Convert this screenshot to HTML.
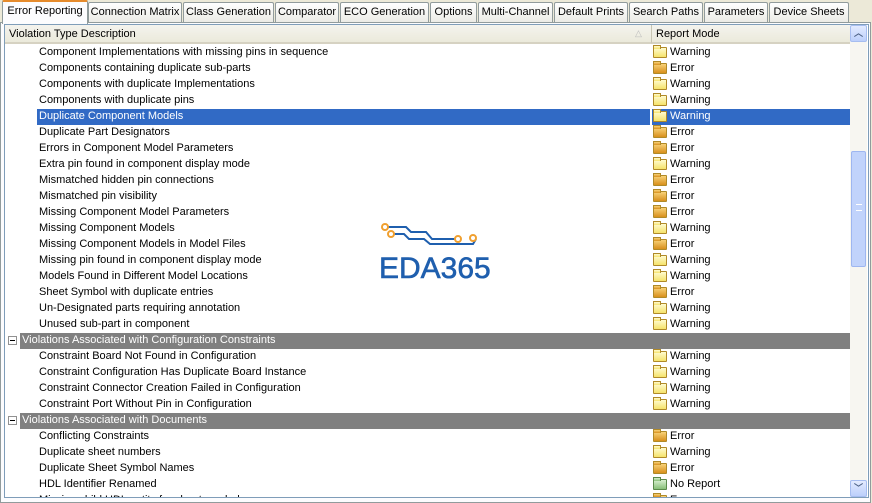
<!DOCTYPE html><html><head><style>
*{margin:0;padding:0;box-sizing:border-box}
body{width:872px;height:503px;background:#ece9d8;font:11px "Liberation Sans",sans-serif;color:#000;position:relative;overflow:hidden}
.tab{position:absolute;top:2px;height:20px;border:1px solid #919b9c;border-bottom:none;background:linear-gradient(#fff,#ecebe6);padding:3px 0 0;text-align:center;white-space:nowrap;border-radius:2px 2px 0 0}
.tab.a{top:0;height:24px;background:#fcfcfe;border-top:2px solid #e68b2c;z-index:2;padding-top:3px}
.panel{position:absolute;left:0;top:22px;width:871px;height:481px;border:1px solid #919b9c;background:#fcfcfe}
.list{position:absolute;left:4px;top:24px;width:865px;height:474px;border:1px solid #7f9db9;background:#fff;overflow:hidden}
.hdr{position:absolute;top:0;height:19px;background:linear-gradient(#f4f3ee,#ebeadb);border-bottom:2px solid #d6d2c2;padding:3px 0 0 4px}
.row{position:absolute;left:0;height:16px;width:846px}
.d{position:absolute;left:34px;top:1px;white-space:nowrap}
.r{position:absolute;left:665px;top:1px}
.f{position:absolute;left:648px;top:2px;width:14px;height:11px;border:1px solid #b08a28;border-radius:1px}
.f:before{content:"";position:absolute;left:-1px;top:-3px;width:6px;height:3px;border:1px solid #b08a28;border-bottom:none;background:inherit}
.w{background:linear-gradient(#fffbd0,#f6e36a)}
.e{background:linear-gradient(#f8d278,#d8901c)}
.n{background:linear-gradient(#d8f0d0,#88c078);border-color:#5a8a4a}.n:before{border-color:#5a8a4a}
.sel{background:#316ac5;color:#fff}
.gw{position:absolute;left:0;height:16px;width:846px}
.gw .bx{position:absolute;left:3px;top:3px;width:9px;height:9px;border:1px solid #919191;background:#fff}
.gw .bx:after{content:"";position:absolute;left:1px;top:3px;width:5px;height:1px;background:#000}
.gw .bar{position:absolute;left:15px;top:0;right:0;height:16px;background:#808080;color:#fff;padding:1px 0 0 2px}
.sb{position:absolute;left:845px;top:0;width:17px;height:472px;background:#f7f6f1}
.btn{position:absolute;left:0;width:17px;height:17px;background:linear-gradient(#e3ebff,#bccffb);border:1px solid #a6bdf0;border-radius:2px;color:#4d6185;font-size:9px;text-align:center;line-height:15px;font-weight:bold}
.thumb{position:absolute;left:1px;top:126px;width:15px;height:116px;background:#c1d3fb;border:1px solid #9eb6f0;border-radius:2px}
</style></head><body>
<div class="panel"></div>
<div class="tab a" style="left:2px;width:86px">Error Reporting</div>
<div class="tab" style="left:88px;width:94px">Connection Matrix</div>
<div class="tab" style="left:183px;width:91px">Class Generation</div>
<div class="tab" style="left:275px;width:64px">Comparator</div>
<div class="tab" style="left:340px;width:89px">ECO Generation</div>
<div class="tab" style="left:430px;width:47px">Options</div>
<div class="tab" style="left:478px;width:75px">Multi-Channel</div>
<div class="tab" style="left:554px;width:74px">Default Prints</div>
<div class="tab" style="left:629px;width:74px">Search Paths</div>
<div class="tab" style="left:704px;width:64px">Parameters</div>
<div class="tab" style="left:769px;width:80px">Device Sheets</div>
<div class="list">
<div class="hdr" style="left:0;width:647px;border-right:1px solid #c7c5b2">Violation Type Description<span style="position:absolute;left:630px;color:#bbb;font-size:9px">△</span></div>
<div class="hdr" style="left:647px;width:198px">Report Mode</div>
<div id="rows"></div>
<div class="sb"><div class="btn" style="top:0">︿</div><div class="thumb"><div style="position:absolute;left:4px;top:52px;width:6px;height:7px;border-top:1px solid #fff;border-bottom:1px solid #fff"></div></div><div class="btn" style="top:455px">﹀</div></div>
</div>
<svg style="position:absolute;left:378px;top:222px" width="120" height="60">
<path d="M7 5 L 28 5 L 33 10 L 48 10 L 54 17 L 78 17" fill="none" stroke="#1f5fae" stroke-width="2"/>
<path d="M13 12 L 26 12 L 31 17 L 46 17 L 52 22 L 95 22 L 98 17" fill="none" stroke="#1f5fae" stroke-width="2"/>
<circle cx="7" cy="5" r="3" fill="#fff" stroke="#f0a030" stroke-width="2"/>
<circle cx="13" cy="12" r="3" fill="#fff" stroke="#f0a030" stroke-width="2"/>
<circle cx="80" cy="17" r="3" fill="#fff" stroke="#f0a030" stroke-width="2"/>
<circle cx="95" cy="16" r="3" fill="#fff" stroke="#f0a030" stroke-width="2"/>
<text x="1" y="56" font-family="Liberation Sans" font-size="30" fill="#1f5fae" stroke="#1f5fae" stroke-width="0.6">EDA365</text>
</svg>
<script>
var R=[["Component Implementations with missing pins in sequence","w"],["Components containing duplicate sub-parts","e"],["Components with duplicate Implementations","w"],["Components with duplicate pins","w"],["Duplicate Component Models","w",1],["Duplicate Part Designators","e"],["Errors in Component Model Parameters","e"],["Extra pin found in component display mode","w"],["Mismatched hidden pin connections","e"],["Mismatched pin visibility","e"],["Missing Component Model Parameters","e"],["Missing Component Models","w"],["Missing Component Models in Model Files","e"],["Missing pin found in component display mode","w"],["Models Found in Different Model Locations","w"],["Sheet Symbol with duplicate entries","e"],["Un-Designated parts requiring annotation","w"],["Unused sub-part in component","w"],["G","Violations Associated with Configuration Constraints"],["Constraint Board Not Found in Configuration","w"],["Constraint Configuration Has Duplicate Board Instance","w"],["Constraint Connector Creation Failed in Configuration","w"],["Constraint Port Without Pin in Configuration","w"],["G","Violations Associated with Documents"],["Conflicting Constraints","e"],["Duplicate sheet numbers","w"],["Duplicate Sheet Symbol Names","e"],["HDL Identifier Renamed","n"],["Missing child HDL entity for sheet symbol","e"]];
var L={w:"Warning",e:"Error",n:"No Report"},h="";
R.forEach(function(r,i){var t=20+16*i;
if(r[0]=="G"){h+='<div class="gw" style="top:'+t+'px"><div class="bx"></div><div class="bar">'+r[1]+'</div></div>';return}
h+='<div class="row" style="top:'+t+'px">'+(r[2]?'<div class="sel" style="position:absolute;left:32px;width:613px;height:16px"></div><div class="sel" style="position:absolute;left:647px;width:199px;height:16px"></div>':'')+'<span class="d"'+(r[2]?' style="color:#fff"':'')+'>'+r[0]+'</span><div class="f '+r[1]+'"></div><span class="r"'+(r[2]?' style="color:#fff"':'')+'>'+L[r[1]]+'</span></div>'});
document.getElementById("rows").innerHTML=h;
</script>
</body></html>
